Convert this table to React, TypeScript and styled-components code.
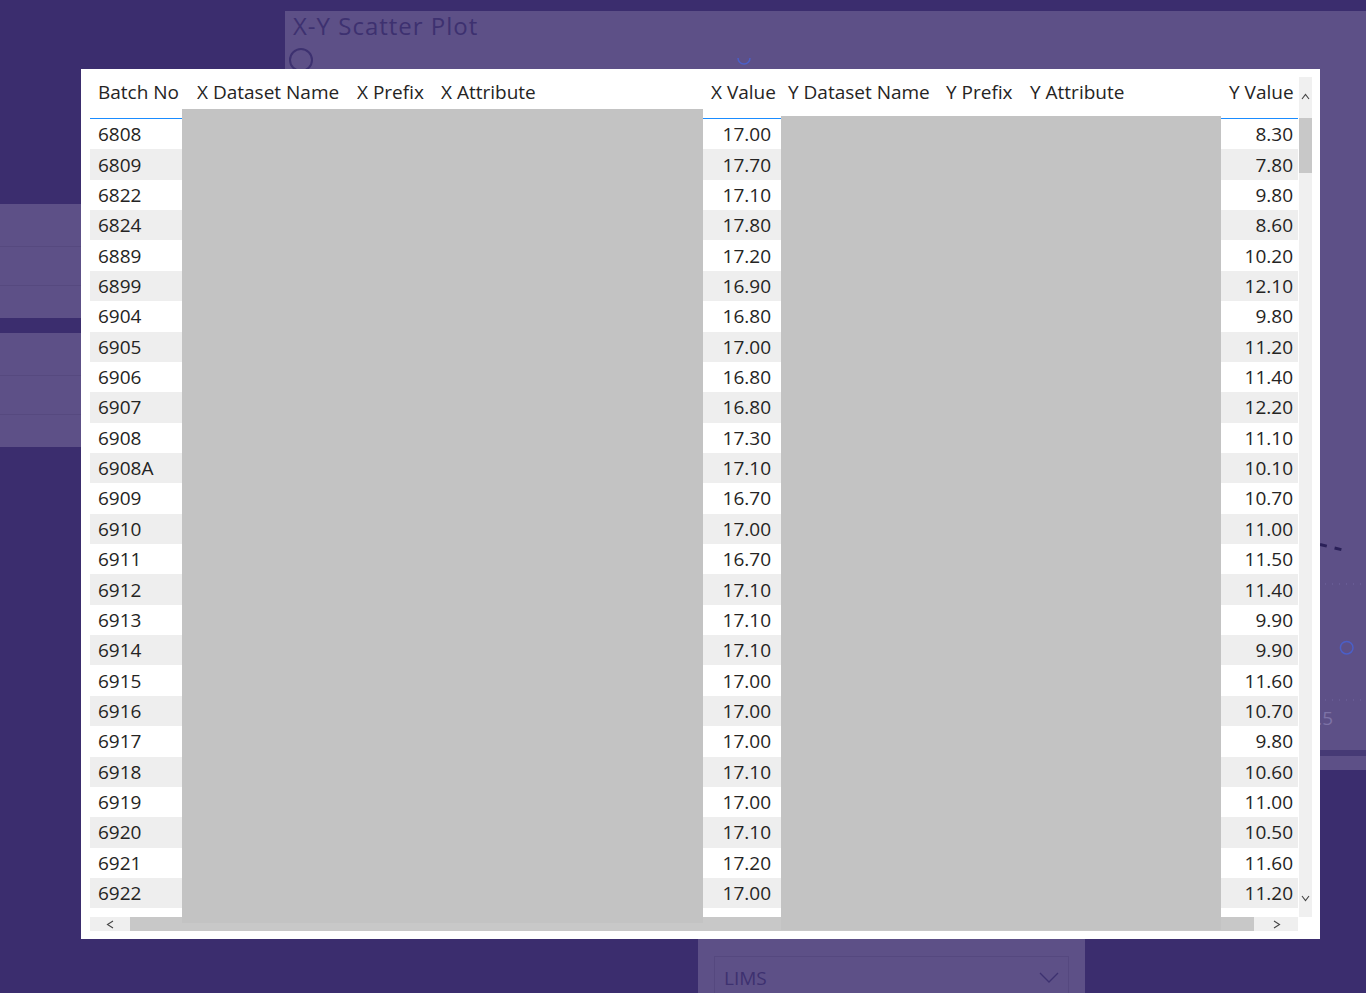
import React from 'react';
import styled, { createGlobalStyle } from 'styled-components';

const Global = createGlobalStyle`
  html, body { margin: 0; padding: 0; background: #3b2d6e; }
  body { font-family: 'Open Sans', 'Noto Sans', sans-serif; overflow: hidden; }
  * { box-sizing: border-box; }
`;

const DARK = '#3b2d6e';
const PANEL = '#5d5087';
const INK = '#3d3170';

const Canvas = styled.div`
  position: relative;
  width: 1366px;
  height: 993px;
  overflow: hidden;
  background: ${DARK};
`;

/* ---------- background dashboard visuals ---------- */
const SideCard = styled.div<{ $top: number }>`
  position: absolute;
  left: 0;
  top: ${(p) => p.$top}px;
  width: 120px;
  height: 114px;
  background: ${PANEL};
  display: grid;
  grid-template-rows: 43px 39px 1fr;
`;
const SideRow = styled.div`
  border-bottom: 1px solid #56497f;
  &:last-child { border-bottom: none; }
`;

const ScatterPanel = styled.div`
  position: absolute;
  left: 285px;
  top: 11px;
  width: 1081px;
  height: 739px;
  background: ${PANEL};
  padding: 0 8px;
`;
const ScatterTitle = styled.div`
  font-family: 'Open Sans', sans-serif;
  font-size: 24px;
  line-height: 30px;
  letter-spacing: 1px;
  color: ${INK};
`;
const LegendMarker = styled.div`
  position: absolute;
  left: 4px;
  top: 37px;
  width: 24px;
  height: 24px;
  border: 2.5px solid ${INK};
  border-radius: 50%;
`;
const ChartMarks = styled.svg`
  position: absolute;
  left: 0;
  top: 0;
  width: 1081px;
  height: 739px;
  pointer-events: none;
`;
const PanelDivider = styled.div`
  position: absolute;
  left: 285px;
  top: 750px;
  width: 1081px;
  height: 6px;
  background: #463a75;
`;
const StripPanel = styled.div`
  position: absolute;
  left: 285px;
  top: 756px;
  width: 1081px;
  height: 14px;
  background: ${PANEL};
`;

const SlicerPanel = styled.div`
  position: absolute;
  left: 698px;
  top: 939px;
  width: 387px;
  height: 60px;
  background: ${PANEL};
  padding: 17px 16px 0 16px;
`;
const Dropdown = styled.div`
  height: 44px;
  border: 1px solid #55487f;
  padding: 0 9px;
  display: flex;
  align-items: center;
  justify-content: space-between;
  font-size: 19px;
  color: ${INK};
`;

/* ---------- modal table ---------- */
const Modal = styled.div`
  position: absolute;
  left: 81px;
  top: 69px;
  width: 1239px;
  height: 870px;
  background: #ffffff;
  padding: 8px 8px 8px 9px;
  display: grid;
  grid-template-columns: 1208px 14px;
  align-items: start;
`;

const COLS = '99px 160px 84px 270px 77px 158px 84px 199px 77px';

const TableArea = styled.div`
  display: flex;
  flex-direction: column;
  width: 1208px;
`;
const HeaderRow = styled.div`
  display: grid;
  grid-template-columns: ${COLS};
  height: 42px;
  border-bottom: 1px solid #1a8cff;
`;
const HeaderCell = styled.div<{ $right?: boolean; $pr?: number }>`
  padding: 4px ${(p) => p.$pr ?? 8}px 0 8px;
  font-size: 19px;
  line-height: 22px;
  color: #252423;
  white-space: nowrap;
  text-align: ${(p) => (p.$right ? 'right' : 'left')};
`;
const Body = styled.div`
  height: 798px;
  overflow: hidden;
`;
const Row = styled.div<{ $alt: boolean }>`
  display: grid;
  grid-template-columns: ${COLS};
  height: 30.36px;
  background: ${(p) => (p.$alt ? '#eeeeee' : '#ffffff')};
`;
const Cell = styled.div<{ $right?: boolean; $pr?: number }>`
  display: flex;
  align-items: center;
  justify-content: ${(p) => (p.$right ? 'flex-end' : 'flex-start')};
  padding: 0 ${(p) => p.$pr ?? 8}px 0 8px;
  font-size: 19px;
  line-height: 22px;
  color: #252423;
  white-space: nowrap;
  overflow: hidden;
`;

const HScroll = styled.div`
  height: 14px;
  display: grid;
  grid-template-columns: 40px 1fr 44px;
`;
const ScrollButton = styled.div`
  background: #efefef;
  display: flex;
  align-items: center;
  justify-content: center;
`;
const HThumb = styled.div`
  background: #c8c8c8;
`;

const VScroll = styled.div`
  margin-left: 1px;
  width: 13px;
  height: 840px;
  background: #f0f0f0;
  display: flex;
  flex-direction: column;
`;
const VButton = styled.div<{ $h: number }>`
  height: ${(p) => p.$h}px;
  display: flex;
  align-items: center;
  justify-content: center;
`;
const VThumb = styled.div`
  height: 55px;
  background: #c8c8c8;
`;
const VSpacer = styled.div`
  flex: 1;
`;

const Redaction = styled.div<{ $variant: 'a' | 'b' }>`
  position: absolute;
  background: #c3c3c3;
  height: 814px;
  left: ${(p) => (p.$variant === 'a' ? 101 : 700)}px;
  top: ${(p) => (p.$variant === 'a' ? 40 : 47)}px;
  width: ${(p) => (p.$variant === 'a' ? 521 : 440)}px;
`;

const Chevron = ({ dir }: { dir: 'up' | 'down' | 'left' | 'right' }) => {
  const pts: Record<string, string> = {
    up: '1,6 4.5,1.5 8,6',
    down: '1,2 4.5,6.5 8,2',
    left: '7,1 1.5,4.5 7,8',
    right: '2,1 7.5,4.5 2,8',
  };
  return (
    <svg width="9" height="9" viewBox="0 0 9 9">
      <polyline points={pts[dir]} fill="none" stroke="#444" strokeWidth="1.1" />
    </svg>
  );
};

const rows: [string, string, string][] = [
  ['6808', '17.00', '8.30'],
  ['6809', '17.70', '7.80'],
  ['6822', '17.10', '9.80'],
  ['6824', '17.80', '8.60'],
  ['6889', '17.20', '10.20'],
  ['6899', '16.90', '12.10'],
  ['6904', '16.80', '9.80'],
  ['6905', '17.00', '11.20'],
  ['6906', '16.80', '11.40'],
  ['6907', '16.80', '12.20'],
  ['6908', '17.30', '11.10'],
  ['6908A', '17.10', '10.10'],
  ['6909', '16.70', '10.70'],
  ['6910', '17.00', '11.00'],
  ['6911', '16.70', '11.50'],
  ['6912', '17.10', '11.40'],
  ['6913', '17.10', '9.90'],
  ['6914', '17.10', '9.90'],
  ['6915', '17.00', '11.60'],
  ['6916', '17.00', '10.70'],
  ['6917', '17.00', '9.80'],
  ['6918', '17.10', '10.60'],
  ['6919', '17.00', '11.00'],
  ['6920', '17.10', '10.50'],
  ['6921', '17.20', '11.60'],
  ['6922', '17.00', '11.20'],
  ['6923', '17.10', '11.30'],
];

export default function App() {
  return (
    <Canvas>
      <Global />
      <SideCard $top={204}>
        <SideRow />
        <SideRow />
        <SideRow />
      </SideCard>
      <SideCard $top={333}>
        <SideRow />
        <SideRow />
        <SideRow />
      </SideCard>

      <ScatterPanel>
        <ScatterTitle>X-Y Scatter Plot</ScatterTitle>
        <LegendMarker />
        <ChartMarks viewBox="0 0 1081 739">
          <path d="M453 47 A6 6 0 0 0 465 47" fill="none" stroke="#4b5fc8" strokeWidth="1.5" />
          <line x1="1035" y1="533.5" x2="1064" y2="540.5" stroke="#2a2058" strokeWidth="3" strokeDasharray="7 8" />
          <line x1="1040" y1="573" x2="1081" y2="573" stroke="#7367a0" strokeWidth="1" strokeDasharray="1 6" />
          <line x1="1040" y1="689" x2="1081" y2="689" stroke="#7367a0" strokeWidth="1" strokeDasharray="1 6" />
          <circle cx="1061.7" cy="636.7" r="6.3" fill="none" stroke="#4b5fc8" strokeWidth="1.5" />
          <text x="1048" y="714" textAnchor="end" fontSize="19" fill="#7d73a6" fontFamily="Open Sans, sans-serif">
            2.5
          </text>
        </ChartMarks>
      </ScatterPanel>
      <PanelDivider />
      <StripPanel />

      <SlicerPanel>
        <Dropdown>
          <span>LIMS</span>
          <svg width="20" height="12" viewBox="0 0 20 12">
            <polyline points="1,1 10,10 19,1" fill="none" stroke={INK} strokeWidth="1.3" />
          </svg>
        </Dropdown>
      </SlicerPanel>

      <Modal>
        <TableArea>
          <HeaderRow>
            <HeaderCell>Batch No</HeaderCell>
            <HeaderCell>X Dataset Name</HeaderCell>
            <HeaderCell>X Prefix</HeaderCell>
            <HeaderCell>X Attribute</HeaderCell>
            <HeaderCell $right $pr={10}>X Value</HeaderCell>
            <HeaderCell>Y Dataset Name</HeaderCell>
            <HeaderCell>Y Prefix</HeaderCell>
            <HeaderCell>Y Attribute</HeaderCell>
            <HeaderCell $right $pr={6}>Y Value</HeaderCell>
          </HeaderRow>
          <Body>
            {rows.map(([b, x, y], i) => (
              <Row key={b} $alt={i % 2 === 1}>
                <Cell>{b}</Cell>
                <Cell />
                <Cell />
                <Cell />
                <Cell $right $pr={9}>{x}</Cell>
                <Cell />
                <Cell />
                <Cell />
                <Cell $right $pr={5}>{y}</Cell>
              </Row>
            ))}
          </Body>
          <HScroll>
            <ScrollButton>
              <Chevron dir="left" />
            </ScrollButton>
            <HThumb />
            <ScrollButton>
              <Chevron dir="right" />
            </ScrollButton>
          </HScroll>
        </TableArea>
        <VScroll>
          <VButton $h={41}>
            <Chevron dir="up" />
          </VButton>
          <VThumb />
          <VSpacer />
          <VButton $h={38}>
            <Chevron dir="down" />
          </VButton>
        </VScroll>
        <Redaction $variant="a" />
        <Redaction $variant="b" />
      </Modal>
    </Canvas>
  );
}
